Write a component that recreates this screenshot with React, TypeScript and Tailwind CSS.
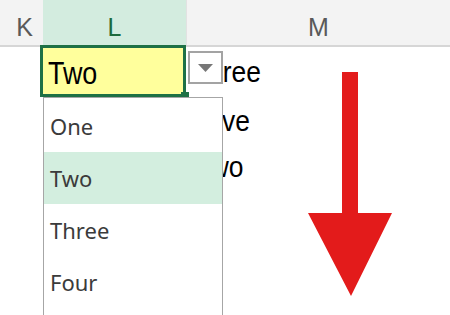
const options = ["One", "Two", "Three", "Four"];

const rows = [
  { h: "h-[50px]", text: "Three", pad: "pl-[6px]", selected: true },
  { h: "h-[47px]", text: "Five", pad: "pl-[14px]", selected: false },
  { h: "h-[46px]", text: "Two", pad: "pl-[9px]", selected: false },
];

export default function App() {
  return (
    <div className="relative h-[315px] w-[450px] overflow-hidden bg-white font-['Liberation_Sans',Arial,sans-serif]">
      {/* column headers */}
      <div className="flex h-[47px] border-b-2 border-[#d6d6d6] bg-[#f3f3f3] text-[25px] leading-none">
        <div className="flex w-[43px] items-center justify-center pl-[6px] pt-[10px] text-[#595959]">K</div>
        <div className="flex w-[143px] items-center justify-center bg-[#d3ecdf] pt-[10px] text-[#1e6b3d]">L</div>
        <div className="flex flex-1 items-center justify-center border-l border-[#e2e2e2] pt-[10px] text-[#595959]">M</div>
      </div>

      {/* grid rows */}
      <div className="flex flex-col text-[30px] leading-none text-black">
        {rows.map((row, i) => (
          <div key={i} className={`flex ${row.h}`}>
            <div className="w-[43px]" />
            <div className={`flex w-[143px] items-center pl-[5px] ${row.selected ? "bg-[#ffff9c]" : ""}`}>
              {row.selected && (
                <span className="inline-block origin-left scale-x-[0.84] pt-[1px] text-[32px]">Two</span>
              )}
            </div>
            <div className={`flex flex-1 items-center ${row.pad}`}>
              <span className="inline-block origin-left scale-x-[0.88]">{row.text}</span>
            </div>
          </div>
        ))}
      </div>

      {/* selected cell outline + fill handle */}
      <div className="pointer-events-none absolute left-[40px] top-[45px] h-[52px] w-[146px] border-[3px] border-[#1e7145]" />
      <div className="absolute left-[181px] top-[92px] h-[7px] w-[8px] bg-[#1e7145]" />

      {/* dropdown button */}
      <div className="absolute left-[188px] top-[51px] flex h-[33px] w-[35px] items-center justify-center border-2 border-[#a3a3a3] bg-white">
        <svg width="15" height="8" viewBox="0 0 15 8">
          <polygon points="0,0 15,0 7.5,8" fill="#777777" />
        </svg>
      </div>

      {/* dropdown list */}
      <div className="absolute left-[43px] top-[97px] h-[240px] w-[180px] border border-[#a6a6a6] bg-white pt-[2px] font-['Noto_Sans',sans-serif] text-[22px] text-[#3b3b3b]">
        {options.map((o) => (
          <div key={o} className={`flex h-[52px] items-center pl-[6px] ${o === "Two" ? "bg-[#d3eedf]" : ""}`}>
            {o}
          </div>
        ))}
      </div>

      {/* red arrow */}
      <svg className="absolute left-0 top-0" width="450" height="315" viewBox="0 0 450 315">
        <polygon points="342,72 358,72 358,213 392,213 351,296 308,213 342,213" fill="#e31b1b" />
      </svg>
    </div>
  );
}
